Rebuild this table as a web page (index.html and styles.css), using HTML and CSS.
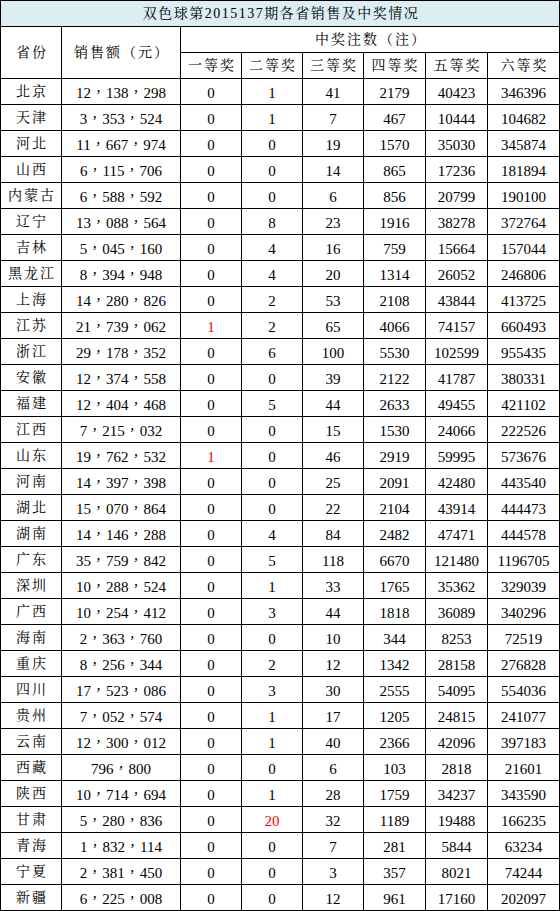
FILE: index.html
```html
<!DOCTYPE html>
<html lang="zh-CN">
<head>
<meta charset="utf-8">
<title>双色球第2015137期各省销售及中奖情况</title>
<link rel="stylesheet" href="styles.css">
</head>
<body>
<table class="sales">
  <colgroup>
    <col class="c-prov"><col class="c-amt"><col class="c-p"><col class="c-p"><col class="c-p"><col class="c-pw"><col class="c-pw"><col class="c-p6">
  </colgroup>
  <thead>
    <tr><th colspan="8" class="title zh">双色球第2015137期各省销售及中奖情况</th></tr>
    <tr><th rowspan="2" class="zh">省份</th><th rowspan="2" class="zh">销售额（元）</th><th colspan="6" class="zh">中奖注数（注）</th></tr>
    <tr><th class="zh">一等奖</th><th class="zh">二等奖</th><th class="zh">三等奖</th><th class="zh">四等奖</th><th class="zh">五等奖</th><th class="zh">六等奖</th></tr>
  </thead>
  <tbody>
    <tr><td class="zh">北京</td><td>12，138，298</td><td>0</td><td>1</td><td>41</td><td>2179</td><td>40423</td><td>346396</td></tr>
    <tr><td class="zh">天津</td><td>3，353，524</td><td>0</td><td>1</td><td>7</td><td>467</td><td>10444</td><td>104682</td></tr>
    <tr><td class="zh">河北</td><td>11，667，974</td><td>0</td><td>0</td><td>19</td><td>1570</td><td>35030</td><td>345874</td></tr>
    <tr><td class="zh">山西</td><td>6，115，706</td><td>0</td><td>0</td><td>14</td><td>865</td><td>17236</td><td>181894</td></tr>
    <tr><td class="zh">内蒙古</td><td>6，588，592</td><td>0</td><td>0</td><td>6</td><td>856</td><td>20799</td><td>190100</td></tr>
    <tr><td class="zh">辽宁</td><td>13，088，564</td><td>0</td><td>8</td><td>23</td><td>1916</td><td>38278</td><td>372764</td></tr>
    <tr><td class="zh">吉林</td><td>5，045，160</td><td>0</td><td>4</td><td>16</td><td>759</td><td>15664</td><td>157044</td></tr>
    <tr><td class="zh">黑龙江</td><td>8，394，948</td><td>0</td><td>4</td><td>20</td><td>1314</td><td>26052</td><td>246806</td></tr>
    <tr><td class="zh">上海</td><td>14，280，826</td><td>0</td><td>2</td><td>53</td><td>2108</td><td>43844</td><td>413725</td></tr>
    <tr><td class="zh">江苏</td><td>21，739，062</td><td class="hit">1</td><td>2</td><td>65</td><td>4066</td><td>74157</td><td>660493</td></tr>
    <tr><td class="zh">浙江</td><td>29，178，352</td><td>0</td><td>6</td><td>100</td><td>5530</td><td>102599</td><td>955435</td></tr>
    <tr><td class="zh">安徽</td><td>12，374，558</td><td>0</td><td>0</td><td>39</td><td>2122</td><td>41787</td><td>380331</td></tr>
    <tr><td class="zh">福建</td><td>12，404，468</td><td>0</td><td>5</td><td>44</td><td>2633</td><td>49455</td><td>421102</td></tr>
    <tr><td class="zh">江西</td><td>7，215，032</td><td>0</td><td>0</td><td>15</td><td>1530</td><td>24066</td><td>222526</td></tr>
    <tr><td class="zh">山东</td><td>19，762，532</td><td class="hit">1</td><td>0</td><td>46</td><td>2919</td><td>59995</td><td>573676</td></tr>
    <tr><td class="zh">河南</td><td>14，397，398</td><td>0</td><td>0</td><td>25</td><td>2091</td><td>42480</td><td>443540</td></tr>
    <tr><td class="zh">湖北</td><td>15，070，864</td><td>0</td><td>0</td><td>22</td><td>2104</td><td>43914</td><td>444473</td></tr>
    <tr><td class="zh">湖南</td><td>14，146，288</td><td>0</td><td>4</td><td>84</td><td>2482</td><td>47471</td><td>444578</td></tr>
    <tr><td class="zh">广东</td><td>35，759，842</td><td>0</td><td>5</td><td>118</td><td>6670</td><td>121480</td><td>1196705</td></tr>
    <tr><td class="zh">深圳</td><td>10，288，524</td><td>0</td><td>1</td><td>33</td><td>1765</td><td>35362</td><td>329039</td></tr>
    <tr><td class="zh">广西</td><td>10，254，412</td><td>0</td><td>3</td><td>44</td><td>1818</td><td>36089</td><td>340296</td></tr>
    <tr><td class="zh">海南</td><td>2，363，760</td><td>0</td><td>0</td><td>10</td><td>344</td><td>8253</td><td>72519</td></tr>
    <tr><td class="zh">重庆</td><td>8，256，344</td><td>0</td><td>2</td><td>12</td><td>1342</td><td>28158</td><td>276828</td></tr>
    <tr><td class="zh">四川</td><td>17，523，086</td><td>0</td><td>3</td><td>30</td><td>2555</td><td>54095</td><td>554036</td></tr>
    <tr><td class="zh">贵州</td><td>7，052，574</td><td>0</td><td>1</td><td>17</td><td>1205</td><td>24815</td><td>241077</td></tr>
    <tr><td class="zh">云南</td><td>12，300，012</td><td>0</td><td>1</td><td>40</td><td>2366</td><td>42096</td><td>397183</td></tr>
    <tr><td class="zh">西藏</td><td>796，800</td><td>0</td><td>0</td><td>6</td><td>103</td><td>2818</td><td>21601</td></tr>
    <tr><td class="zh">陕西</td><td>10，714，694</td><td>0</td><td>1</td><td>28</td><td>1759</td><td>34237</td><td>343590</td></tr>
    <tr><td class="zh">甘肃</td><td>5，280，836</td><td>0</td><td class="hit">20</td><td>32</td><td>1189</td><td>19488</td><td>166235</td></tr>
    <tr><td class="zh">青海</td><td>1，832，114</td><td>0</td><td>0</td><td>7</td><td>281</td><td>5844</td><td>63234</td></tr>
    <tr><td class="zh">宁夏</td><td>2，381，450</td><td>0</td><td>0</td><td>3</td><td>357</td><td>8021</td><td>74244</td></tr>
    <tr><td class="zh">新疆</td><td>6，225，008</td><td>0</td><td>0</td><td>12</td><td>961</td><td>17160</td><td>202097</td></tr>
  </tbody>
</table>
</body>
</html>
```

FILE: styles.css
```css
html, body {
  margin: 0;
  padding: 0;
  background: #ffffff;
}

body {
  font-family: "Liberation Serif", "Noto Serif CJK TC", "Noto Serif CJK SC", "AR PL UMing TW", "AR PL UMing CN", "Noto Sans CJK TC", "Noto Sans CJK SC", serif;
  color: #000000;
}

.sales {
  border-collapse: separate;
  border-spacing: 0;
  table-layout: fixed;
  width: 560px;
  border-top: 1px solid #000;
  border-left: 1px solid #000;
}

.c-prov { width: 61px; }
.c-amt { width: 119px; }
.c-p { width: 61px; }
.c-pw { width: 62px; }
.c-p6 { width: 72px; }

.sales th,
.sales td {
  box-sizing: border-box;
  height: 26px;
  padding: 2px 0 0 0;
  border-right: 1px solid #000;
  border-bottom: 1px solid #000;
  text-align: center;
  vertical-align: middle;
  font-weight: normal;
  font-size: 15px;
  line-height: 18px;
  white-space: nowrap;
}

.sales .zh {
  font-size: 14px;
  letter-spacing: 2px;
  text-indent: 2px;
  padding-top: 0;
}

.sales .title {
  background: #daeef3;
  letter-spacing: 1.5px;
}

.sales .hit {
  color: #ff0000;
}
```
